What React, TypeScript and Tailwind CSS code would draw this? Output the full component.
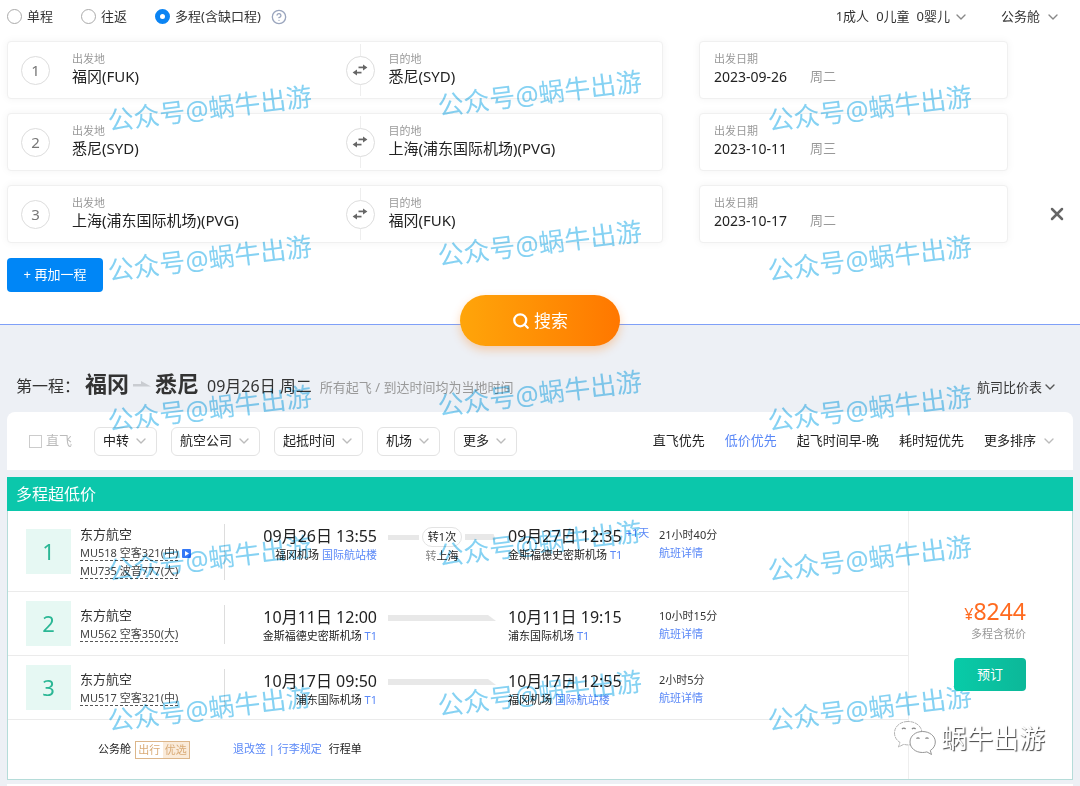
import { useState } from "react";
import { ChevronDown, CircleHelp, Search, X } from "lucide-react";

const trips = [
  { id: 1, from: "福冈(FUK)", to: "悉尼(SYD)", date: "2023-09-26", week: "周二" },
  { id: 2, from: "悉尼(SYD)", to: "上海(浦东国际机场)(PVG)", date: "2023-10-11", week: "周三" },
  { id: 3, from: "上海(浦东国际机场)(PVG)", to: "福冈(FUK)", date: "2023-10-17", week: "周二" },
];

const filters = ["中转", "航空公司", "起抵时间", "机场", "更多"];
const sorts = ["直飞优先", "低价优先", "起飞时间早-晚", "耗时短优先"];

type Flight = {
  id: number;
  airline: string;
  planes: string[];
  video?: boolean;
  depart: { time: string; airport: string; terminal: string };
  arrive: { time: string; airport: string; terminal: string; plus?: string };
  transfer?: string;
  duration: string;
};

const flights: Flight[] = [
  {
    id: 1,
    airline: "东方航空",
    planes: ["MU518 空客321(中)", "MU735 波音777(大)"],
    video: true,
    depart: { time: "09月26日 13:55", airport: "福冈机场", terminal: "国际航站楼" },
    arrive: { time: "09月27日 12:35", airport: "金斯福德史密斯机场", terminal: "T1", plus: "+1天" },
    transfer: "上海",
    duration: "21小时40分",
  },
  {
    id: 2,
    airline: "东方航空",
    planes: ["MU562 空客350(大)"],
    depart: { time: "10月11日 12:00", airport: "金斯福德史密斯机场", terminal: "T1" },
    arrive: { time: "10月11日 19:15", airport: "浦东国际机场", terminal: "T1" },
    duration: "10小时15分",
  },
  {
    id: 3,
    airline: "东方航空",
    planes: ["MU517 空客321(中)"],
    depart: { time: "10月17日 09:50", airport: "浦东国际机场", terminal: "T1" },
    arrive: { time: "10月17日 12:55", airport: "福冈机场", terminal: "国际航站楼" },
    duration: "2小时5分",
  },
];

const SwapIcon = () => (
  <svg viewBox="0 0 16 12" className="h-3 w-4" fill="none" stroke="#666" strokeWidth="1.7">
    <path d="M6.500 3.400H12" />
    <path d="M11 0.400L15.400 3.400L11 6.400Z" fill="#666" stroke="none" />
    <path d="M9.500 8.600H4" />
    <path d="M5 5.600L0.600 8.600L5 11.600Z" fill="#666" stroke="none" />
  </svg>
);

const RouteBar = () => (
  <svg viewBox="0 0 108 6" preserveAspectRatio="none" className="h-[6px] w-full" fill="#e8e8e8">
    <path d="M0 0H100L108 6H0Z" />
  </svg>
);

const WechatIcon = () => (
  <svg viewBox="0 0 44 36" className="h-9 w-11" fill="#fff" stroke="#8a8a8a" strokeWidth="0.9">
    <path d="M15 1.500C7.300 1.500 1.500 6.500 1.500 13C1.500 17 3.600 20.300 7 22.500L5.500 27L10.800 24.300C12.200 24.700 13.600 24.900 15 24.900C23 24.900 29 19.800 29 13.200C29 6.500 23 1.500 15 1.500Z" stroke="#aaa" strokeDasharray="4 0.700" />
    <path d="M29.500 11.500C22.500 11.500 17 16 17 22C17 28 22.500 32.500 29.500 32.500C31 32.500 32.500 32.300 33.900 31.900L38.500 34.500L37.300 30.500C40.500 28.500 42.300 25.500 42.300 22C42.300 16 36.500 11.500 29.500 11.500Z" />
    <path d="M9 9C10 7.800 11.600 7.800 12.600 9M19 9C20 7.800 21.600 7.800 22.600 9M23.500 18.700C24.300 17.700 25.700 17.700 26.500 18.700M32.500 18.700C33.300 17.700 34.700 17.700 35.500 18.700" fill="none" strokeWidth="1.300" />
  </svg>
);

const Dropdown = ({ label, className, iconClass }: { label: string; className: string; iconClass: string }) => (
  <span className="flex items-center">
    <select aria-label={label} className={`appearance-none bg-transparent outline-none ${className}`}>
      <option>{label}</option>
    </select>
    <ChevronDown className={`pointer-events-none h-4 w-4 ${iconClass}`} strokeWidth={2} />
  </span>
);

const TripTypes = () => {
  const [type, setType] = useState("multi");
  const types = [
    { id: "single", label: "单程" },
    { id: "round", label: "往返" },
    { id: "multi", label: "多程(含缺口程)" },
  ];

  return (
    <div className="flex items-center gap-[28px]">
      {types.map((item) => (
        <label key={item.id} className="flex items-center gap-[5px]">
          <input
            type="radio"
            name="tripType"
            checked={type === item.id}
            onChange={() => setType(item.id)}
            className="h-[15px] w-[15px] appearance-none rounded-full border border-[#aaa] bg-white checked:border-[5px] checked:border-[#0b84f3]"
          />
          {item.label}
        </label>
      ))}
      <CircleHelp className="-ml-[18px] h-4 w-4 text-[#9aa5bd]" strokeWidth={2} />
    </div>
  );
};

const Field = ({ id, label, value }: { id: string; label: string; value: string }) => (
  <div className="min-w-0 flex-1 pb-[3px]">
    <label htmlFor={id} className="block text-[11px] leading-4 text-[#999]">{label}</label>
    <input id={id} type="text" defaultValue={value} className="block h-5 w-full bg-transparent text-[15px] text-[#222] outline-none" />
  </div>
);

const TripRow = ({ trip, removable }: { trip: (typeof trips)[0]; removable: boolean }) => (
  <div className="flex items-center">
    <div className="flex h-[58px] min-w-0 flex-1 items-center rounded border border-[#f0f0f0] bg-white pl-[13px] shadow-[0_0_8px_rgba(0,0,0,0.05)]">
      <span className="mr-[22px] flex h-[29px] w-[29px] shrink-0 items-center justify-center rounded-full border border-[#ddd] text-[15px] text-[#777]">
        {trip.id}
      </span>
      <Field id={`from-${trip.id}`} label="出发地" value={trip.from} />
      <div className="mr-[14px] flex h-full shrink-0 flex-col items-center py-[2px]">
        <span className="w-px flex-1 bg-[#eee]" />
        <button type="button" aria-label="交换" className="flex h-[29px] w-[29px] items-center justify-center rounded-full border border-[#ddd]">
          <SwapIcon />
        </button>
        <span className="w-px flex-1 bg-[#eee]" />
      </div>
      <Field id={`to-${trip.id}`} label="目的地" value={trip.to} />
    </div>
    <div className="ml-9 flex h-[58px] w-[309px] items-center rounded border border-[#f0f0f0] bg-white px-[14px] shadow-[0_0_8px_rgba(0,0,0,0.05)]">
      <div className="pb-[3px]">
        <label htmlFor={`date-${trip.id}`} className="block text-[11px] leading-4 text-[#999]">出发日期</label>
        <div className="flex h-5 items-center">
          <input id={`date-${trip.id}`} type="text" defaultValue={trip.date} className="w-24 bg-transparent text-[14px] text-[#222] outline-none" />
          <span className="text-[13px] text-[#999]">{trip.week}</span>
        </div>
      </div>
    </div>
    <div className="flex w-[65px] justify-center pl-8">
      {removable && (
        <button type="button" aria-label="删除">
          <X className="h-5 w-5 text-[#666]" strokeWidth={3} />
        </button>
      )}
    </div>
  </div>
);

const FlightRow = ({ flight }: { flight: Flight }) => (
  <li className="grid min-h-16 grid-cols-[54px_145fr_152fr_131fr_151fr_249fr] border-b border-[#ebebeb] pl-[18px] whitespace-nowrap">
    <span className="flex h-[45px] w-[45px] items-center justify-center self-center bg-[#e6f8f3] text-[22px] text-[#2bb795]">
      {flight.id}
    </span>
    <div className="mt-[13px] mb-[11px] border-r border-[#ddd] text-[11px] text-[#444]">
      <p className="text-[13px] leading-5 text-[#333]">{flight.airline}</p>
      {flight.planes.map((plane, index) => (
        <p key={plane} className="flex h-[18px] items-center gap-1">
          <span className="border-b border-dashed border-[#555] leading-[14px]">{plane}</span>
          {flight.video && index === 0 && (
            <svg viewBox="0 0 9 9" className="h-[9px] w-[9px]">
              <rect width="9" height="9" rx="1" fill="#3478f6" />
              <path d="M3 2L7 4.500L3 7Z" fill="#fff" />
            </svg>
          )}
        </p>
      ))}
    </div>
    <div className="mt-[14px] text-right text-[11px] leading-4 text-[#222]">
      <p className="text-[16px] leading-[22px]">{flight.depart.time}</p>
      <p>
        {flight.depart.airport} <span className="text-[#5a88f7]">{flight.depart.terminal}</span>
      </p>
    </div>
    <div className="mt-[15px] mr-3 ml-[11px] text-[11px] leading-4">
      {flight.transfer ? (
        <>
          <div className="flex h-[22px] items-center gap-[3px]">
            <span className="h-[5px] flex-1 bg-[#e8e8e8]" />
            <span className="rounded-full border border-[#e3e3e3] px-[5px] leading-[18px] text-[#222]">转1次</span>
            <span className="flex-1"><RouteBar /></span>
          </div>
          <p className="text-center text-[#222]">
            <span className="text-[#888]">转</span>{flight.transfer}
          </p>
        </>
      ) : (
        <div className="flex h-[22px] items-center"><RouteBar /></div>
      )}
    </div>
    <div className="mt-[14px] text-[11px] leading-4 text-[#222]">
      <p className="flex text-[16px] leading-[22px]">
        {flight.arrive.time}
        {flight.arrive.plus && <span className="ml-1 text-[11px] leading-4 text-[#5a88f7]">{flight.arrive.plus}</span>}
      </p>
      <p>
        {flight.arrive.airport} <span className="text-[#5a88f7]">{flight.arrive.terminal}</span>
      </p>
    </div>
    <div className="mt-[15px] text-[11px] leading-[18px] text-[#333]">
      <p>{flight.duration}</p>
      <a href="#detail" className="text-[#5a88f7]">航班详情</a>
    </div>
  </li>
);

// Repeating diagonal account mark laid over the whole page
const Watermarks = () => (
  <div aria-hidden="true" className="pointer-events-none absolute inset-0 z-10 overflow-hidden px-[45px] pt-[33px] mix-blend-multiply">
    <div className="grid auto-rows-[150px] grid-cols-3 items-center justify-items-center">
      {Array.from({ length: 15 }, (_, index) => (
        <span
          key={index}
          className={`-rotate-7 text-[26px] leading-none whitespace-nowrap text-[#86d2f3] ${index % 3 === 1 ? "-mt-[30px]" : ""}`}
        >
          公众号@蜗牛出游
        </span>
      ))}
    </div>
  </div>
);

export default function App() {
  const [sort, setSort] = useState("低价优先");

  return (
    <div className="relative min-h-screen overflow-hidden bg-[#edf0f5] font-['Noto_Sans','Noto_Sans_CJK_SC',sans-serif] text-[13px] text-[#333]">
      <section className="border-b border-[#7fa0f8] bg-white px-[7px]">
        <div className="flex h-[41px] items-center justify-between pr-3 pb-2">
          <TripTypes />
          <div className="flex items-center gap-8">
            <button type="button" className="flex items-center gap-[7px]">
              <span>1成人</span>
              <span>0儿童</span>
              <span>0婴儿</span>
              <ChevronDown className="-ml-1 h-4 w-4 text-[#888]" strokeWidth={2} />
            </button>
            <Dropdown label="公务舱" className="" iconClass="ml-1 text-[#888]" />
          </div>
        </div>

        <div className="flex flex-col gap-[14px]">
          {trips.map((trip) => (
            <TripRow key={trip.id} trip={trip} removable={trip.id === 3} />
          ))}
        </div>

        <button type="button" className="mt-[15px] block h-[34px] w-24 rounded bg-[#0086f6] text-[13px] text-white">
          + 再加一程
        </button>

        <div className="mt-[3px] flex justify-center">
          <button
            type="button"
            className="relative z-20 -mb-[22px] flex h-[51px] w-40 items-center justify-center gap-1 rounded-full bg-linear-to-r from-[#ffa50a] to-[#ff7700] text-[17px] text-white shadow-[0_4px_10px_rgba(255,119,0,0.3)]"
          >
            <Search className="h-[18px] w-[18px]" strokeWidth={3} />
            搜索
          </button>
        </div>
      </section>

      <section className="px-[7px]">
        <div className="flex h-[87px] items-end justify-between pr-[15px] pb-3 pl-[9px]">
          <h2 className="flex items-baseline whitespace-nowrap">
            <span className="mr-[5px] text-[16px]">第一程：</span>
            <strong className="text-[22px]">福冈</strong>
            <svg viewBox="0 0 18 6" className="mx-1 h-[6px] w-[18px] self-center" fill="#c9ccd1">
              <path d="M0 3H8V0L18 5.500H0Z" />
            </svg>
            <strong className="text-[22px]">悉尼</strong>
            <span className="ml-2 text-[16px]">09月26日 周二</span>
            <span className="ml-2 text-[13px] text-[#999]">所有起飞 / 到达时间均为当地时间</span>
          </h2>
          <button type="button" className="mb-[3px] flex items-center">
            航司比价表
            <ChevronDown className="h-4 w-4 text-[#555]" strokeWidth={2} />
          </button>
        </div>

        <div className="flex h-[58px] items-center justify-between rounded-t-lg bg-white pr-4 pl-[22px] whitespace-nowrap text-[#222]">
          <div className="flex items-center gap-[14px]">
            <label className="mr-2 flex items-center gap-1 text-[#bbb]">
              <input type="checkbox" className="h-[13px] w-[13px] appearance-none border border-[#ccc] bg-white" />
              直飞
            </label>
            {filters.map((filter) => (
              <Dropdown
                key={filter}
                label={filter}
                className="h-[29px] rounded-md border border-[#e3e3e3] pr-[26px] pl-2"
                iconClass="-ml-[24px] mr-2 text-[#bbb]"
              />
            ))}
          </div>
          <div className="flex items-center gap-5">
            {sorts.map((item) => (
              <button key={item} type="button" onClick={() => setSort(item)} className={sort === item ? "text-[#5a88f7]" : ""}>
                {item}
              </button>
            ))}
            <Dropdown label="更多排序" className="" iconClass="ml-1 text-[#bbb]" />
          </div>
        </div>

        <div className="relative mt-[7px] border border-t-0 border-[#b5dcd9] bg-white">
          <h3 className="-mx-px flex h-[34px] items-center bg-[#0bc7ab] pl-[9px] text-[16px] text-white">多程超低价</h3>
          <div className="flex">
            <div className="min-w-0 flex-1">
              <ul>
                {flights.map((flight) => (
                  <FlightRow key={flight.id} flight={flight} />
                ))}
              </ul>
              <div className="flex h-[59px] items-center pl-[90px] text-[11px] text-[#222]">
                公务舱
                <span className="ml-1 flex h-[18px] w-[55px] items-center border border-[#dcb68a] leading-4 text-[#d9ab77]">
                  <span className="flex-1 text-center">出行</span>
                  <span className="flex-1 bg-[#faebda] text-center">优选</span>
                </span>
                <span className="ml-[43px] text-[#5a88f7]">
                  <a href="#refund">退改签</a> | <a href="#baggage">行李规定</a>
                </span>
                <span className="ml-[7px]">行程单</span>
              </div>
            </div>
            <div className="flex w-[164px] flex-col items-end justify-center border-l border-[#eee] pr-[46px]">
              <p className="text-[23px] leading-6 text-[#ff6a1f]">
                <span className="text-[16px]">¥</span>8244
              </p>
              <p className="text-[11px] leading-4 text-[#999]">多程含税价</p>
              <button type="button" className="relative z-20 mt-4 h-[33px] w-[72px] rounded bg-linear-to-r from-[#08cba8] to-[#0cb899] text-[13px] text-white">
                预订
              </button>
            </div>
          </div>
          <div className="pointer-events-none absolute right-[27px] bottom-[23px] z-20 flex items-center gap-1">
            <WechatIcon />
            <span className="text-[26px] leading-9 text-white [text-shadow:1px_1px_1px_#444]">蜗牛出游</span>
          </div>
        </div>
        <div className="mt-1 h-[3px] bg-white" />
      </section>

      <Watermarks />
    </div>
  );
}
